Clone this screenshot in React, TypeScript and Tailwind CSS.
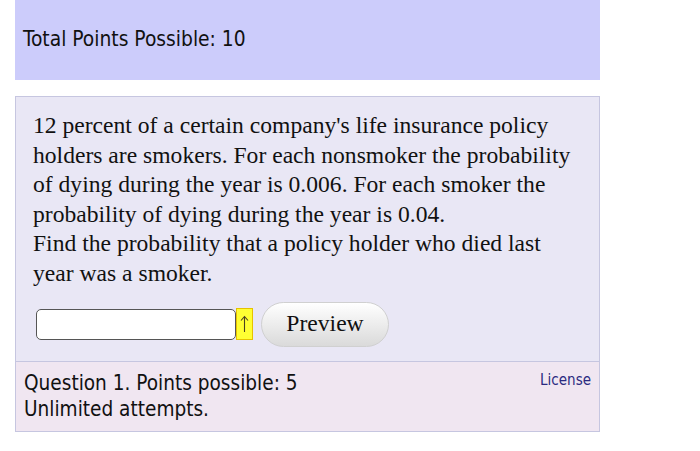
import React from 'react';

export default function App() {
  return (
    <div className="w-[700px] h-[451px] bg-white overflow-hidden">
      <div className="ml-[15px] w-[585px]">
        {/* Points header */}
        <div className="h-[80px] bg-[#ccccfb] flex items-center px-[8px] text-[20.8px] text-[#111] font-['DejaVu_Sans_Condensed','Liberation_Sans',sans-serif]">
          Total Points Possible: 10
        </div>

        {/* Question box */}
        <div className="mt-[16px] border border-[#c6c6e0] bg-[#e9e7f5]">
          <div className="pl-[17px] pr-[20px] pt-[14px] pb-[14px] font-['Liberation_Serif',serif] text-[23.6px] leading-[29.6px] text-[#111]">
            <p>
              12 percent of a certain company's life insurance policy holders are smokers. For each nonsmoker the probability of dying during the year is 0.006. For each smoker the probability of dying during the year is 0.04.
            </p>
            <p>Find the probability that a policy holder who died last year was a smoker.</p>
            <div className="flex items-center mt-[13px] ml-[3px]">
              <input
                type="text"
                className="w-[200px] h-[31px] bg-white border border-[#555] rounded-[5px]"
              />
              <div className="w-[17px] h-[32px] bg-[#ffff33] border border-[#e6c200] flex items-center justify-center">
                <svg width="9" height="18" viewBox="0 0 9 18" fill="none" stroke="#4a4020" strokeWidth="1.1">
                  <path d="M4.5 17V1.5M1 5.5L4.5 1.5L8 5.5" />
                </svg>
              </div>
              <button className="ml-[8px] w-[128px] h-[45px] rounded-full border border-[#d0d0d0] bg-gradient-to-b from-white to-[#dadada] text-[23.6px] text-[#111] font-['Liberation_Serif',serif]">
                Preview
              </button>
            </div>
          </div>
          <div className="border-t border-[#c6c6e0] bg-[#f0e6f1] h-[70px] px-[8px] pt-[8px] flex justify-between font-['DejaVu_Sans_Condensed','Liberation_Sans',sans-serif]">
            <div className="text-[20.6px] leading-[26px] text-[#111]">
              <div>Question 1. Points possible: 5</div>
              <div>Unlimited attempts.</div>
            </div>
            <div className="text-[15px] text-[#2a2a80] -mt-[1px]">License</div>
          </div>
        </div>
      </div>
    </div>
  );
}
